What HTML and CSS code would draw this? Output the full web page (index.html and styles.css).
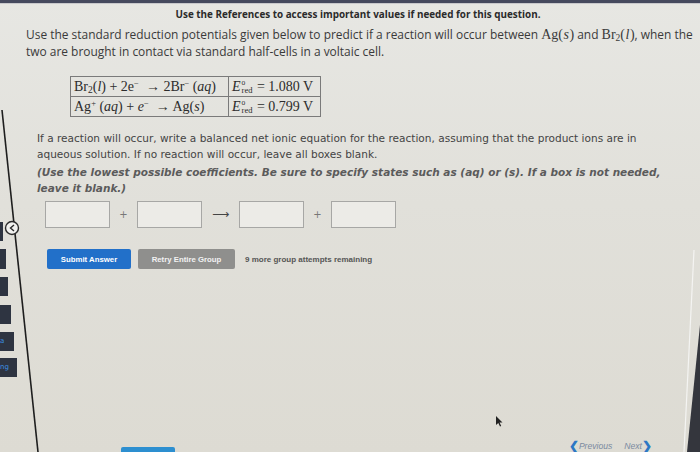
FILE: index.html
```html
<!DOCTYPE html>
<html>
<head>
<meta charset="utf-8">
<link rel="stylesheet" href="styles.css">
</head>
<body>
<div class="topbar"></div>
<div class="page">
  <div class="header">Use the References to access important values if needed for this question.</div>
  <p class="intro">Use the standard reduction potentials given below to predict if a reaction will occur between <span class="m">Ag(<i>s</i>)</span> and <span class="m">Br<sub>2</sub>(<i>l</i>)</span>, when the two are brought in contact via standard half-cells in a voltaic cell.</p>
  <table class="pot">
    <tr>
      <td class="rx">Br<sub>2</sub>(<i>l</i>) + 2e<sup>−</sup> &nbsp;→ 2Br<sup>−</sup> (<i>aq</i>)</td>
      <td class="ev"><span class="e"><i>E</i><span class="st"><span class="deg">o</span><span class="red">red</span></span></span> = 1.080 V</td>
    </tr>
    <tr>
      <td class="rx">Ag<sup>+</sup> (<i>aq</i>) + <i>e</i><sup>−</sup> &nbsp;→ Ag(<i>s</i>)</td>
      <td class="ev"><span class="e"><i>E</i><span class="st"><span class="deg">o</span><span class="red">red</span></span></span> = 0.799 V</td>
    </tr>
  </table>
  <div class="body">
    <p class="q">If a reaction will occur, write a balanced net ionic equation for the reaction, assuming that the product ions are in aqueous solution. If no reaction will occur, leave all boxes blank.</p>
    <p class="hint">(Use the lowest possible coefficients. Be sure to specify states such as (aq) or (s). If a box is not needed, leave it blank.)</p>
    <div class="eq">
      <div class="box"></div><span class="op">+</span><div class="box"></div><span class="arrow">⟶</span><div class="box"></div><span class="op">+</span><div class="box"></div>
    </div>
    <div class="actions">
      <button class="btn submit">Submit Answer</button>
      <button class="btn retry">Retry Entire Group</button>
      <span class="remain">9 more group attempts remaining</span>
    </div>
  </div>
  <div class="nav">
    <span class="navlink"><span class="chev">❮</span>Previous</span>
    <span class="navlink">Next<span class="chev">❯</span></span>
  </div>
  <div class="peek"></div>
</div>

<div class="sidebar">
  <div class="tab t1"></div>
  <div class="tab t2"></div>
  <div class="tab t3"></div>
  <div class="tab t4"></div>
  <div class="tab t5"><span>a</span></div>
  <div class="tab t6"><span>ng</span></div>
</div>
<svg class="edges" width="700" height="452" viewBox="0 0 700 452">
  <line x1="2" y1="110" x2="38" y2="452" stroke="#1e1e1e" stroke-width="1.6"/>
  <line x1="694" y1="250" x2="684" y2="452" stroke="#f4f4f2" stroke-width="1.2"/>
  <polygon points="700,325 700,452 687,452" fill="#34363d"/>
  <circle cx="12" cy="228" r="6.5" fill="#f1f1ef" stroke="#2a2a2a" stroke-width="1.4"/>
  <path d="M14 225 L10.5 228 L14 231" fill="none" stroke="#2a2a2a" stroke-width="1.4"/>
  <path d="M496 416 L496 425 L498.3 423 L500 426.5 L501.2 426 L499.6 422.6 L502.5 422.4 Z" fill="#222"/>
</svg>
</body>
</html>
```
FILE: styles.css
```css
html, body {
  margin: 0;
  padding: 0;
}
body {
  width: 700px;
  height: 452px;
  overflow: hidden;
  position: relative;
  background: linear-gradient(180deg, #e7e7e3 0%, #e1e0da 45%, #dddbd3 100%);
  font-family: "Open Sans", "DejaVu Sans", sans-serif;
  color: #333;
}
.topbar {
  height: 3px;
  background: #464a5e;
  border-bottom: 1px solid #c9c9cc;
}
.page {
  padding-left: 26px;
}
.header {
  text-align: center;
  font-weight: 700;
  font-size: 9.9px;
  line-height: 13px;
  color: #2b2b2b;
  margin-top: 4px;
  padding-right: 10px;
}
.intro {
  margin: 5px 0 0 0;
  font-size: 11.95px;
  line-height: 17px;
  color: #3a3a3a;
  width: 674px;
}
.m {
  font-family: "Liberation Serif", serif;
  font-size: 14px;
  line-height: 14px;
}
.m i {
  padding: 0 0.5px;
}
.m sub {
  font-size: 9.5px;
  vertical-align: -2px;
  line-height: 0;
}
.pot {
  border-collapse: collapse;
  margin: 16px 0 0 44px;
  font-family: "Liberation Serif", serif;
  font-size: 14px;
  color: #2c2c2c;
}
.pot td {
  border: 1px solid #7a7a7a;
  height: 19px;
  padding: 0 2px 0 3px;
  line-height: 16px;
  white-space: nowrap;
}
.pot td.rx {
  width: 152px;
}
.pot td.ev {
  width: 86px;
}
.pot sup {
  font-size: 8.5px;
  vertical-align: 5px;
  line-height: 0;
}
.pot sub {
  font-size: 9.5px;
  vertical-align: -2px;
  line-height: 0;
}
.e {
  display: inline-flex;
  align-items: flex-start;
  margin-right: 1px;
}
.st {
  display: inline-flex;
  flex-direction: column;
  font-size: 8.5px;
  line-height: 7px;
  margin-left: 1px;
}
.deg {
  font-size: 7.5px;
}
.red {
  line-height: 9px;
}
.body {
  padding-left: 11px;
  font-family: "DejaVu Sans", Verdana, sans-serif;
}
.q {
  margin: 13px 0 0 0;
  font-size: 10.55px;
  line-height: 16px;
  color: #444;
  width: 640px;
}
.hint {
  margin: 2px 0 0 0;
  font-size: 10.5px;
  line-height: 16px;
  font-weight: 700;
  font-style: italic;
  color: #5b5b5b;
  width: 640px;
}
.eq {
  display: flex;
  align-items: center;
  margin-top: 4px;
  padding-left: 8px;
  height: 28px;
}
.box {
  width: 63px;
  height: 25px;
  border: 1px solid #a7a7a5;
  background: #ecebe7;
}
.op {
  width: 27px;
  text-align: center;
  font-size: 10px;
  color: #777;
}
.arrow {
  width: 37px;
  text-align: center;
  font-size: 12px;
  color: #444;
}
.actions {
  display: flex;
  align-items: center;
  margin-top: 21px;
  padding-left: 10px;
  gap: 7px;
}
.btn {
  font-family: "Liberation Sans", Arial, sans-serif;
  font-weight: 700;
  font-size: 7.8px;
  color: #fff;
  border: none;
  border-radius: 2px;
  height: 20px;
  padding: 0;
}
.submit {
  width: 84px;
  background: #2270c9;
}
.retry {
  width: 97px;
  background: #8f8f8d;
  color: #f2f2f2;
}
.remain {
  margin-left: 3px;
  font-family: "Liberation Sans", Arial, sans-serif;
  font-weight: 700;
  font-size: 8px;
  color: #555;
}
.nav {
  display: flex;
  justify-content: flex-end;
  gap: 12px;
  margin-top: 170px;
  padding-right: 48px;
  font-family: "Liberation Sans", Arial, sans-serif;
  font-size: 8.6px;
  color: #7a8aa0;
  font-style: italic;
}
.navlink {
  display: flex;
  align-items: center;
}
.chev {
  font-style: normal;
  font-size: 12px;
  color: #2c77c4;
  font-weight: 700;
}
.peek {
  position: absolute;
  left: 121px;
  top: 447px;
  width: 54px;
  height: 8px;
  border-radius: 2px;
  background: #2d8fd0;
}
.sidebar {
  position: absolute;
  left: 0;
  top: 0;
  width: 40px;
  height: 452px;
}
.tab {
  position: absolute;
  left: 0;
  height: 19px;
  background: #2e3441;
  font-family: "DejaVu Sans", sans-serif;
  font-size: 7px;
  color: #3c8fe0;
  line-height: 19px;
}
.t1 { top: 222px; width: 3px; }
.t2 { top: 249px; width: 6px; height: 20px; }
.t3 { top: 277px; width: 8px; }
.t4 { top: 305px; width: 11px; }
.t5 { top: 332px; width: 14px; }
.t6 { top: 358px; width: 17px; }
.edges {
  position: absolute;
  left: 0;
  top: 0;
}
```
